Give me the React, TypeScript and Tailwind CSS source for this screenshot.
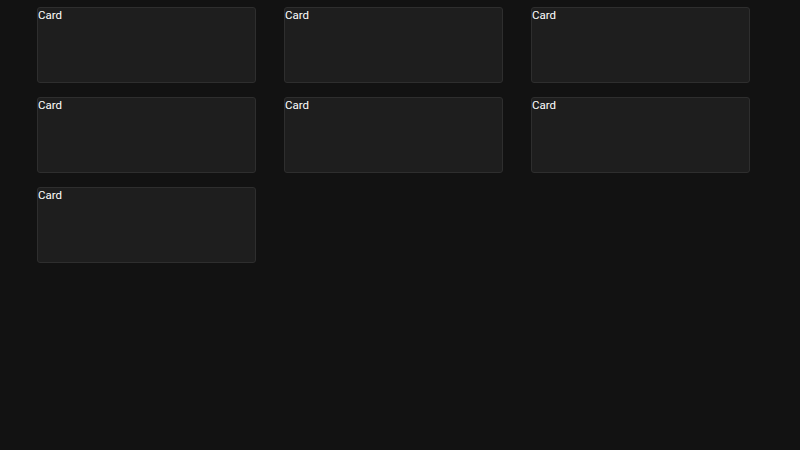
const cards = Array.from({length: 7}, (_, i) => i)

const App = () => {
  return (
    <div className="w-[800px] h-[450px] bg-[#121212] overflow-hidden" style={{fontFamily: "Roboto, sans-serif"}}>
      <div className="grid grid-cols-[219px_219px_219px] gap-x-[28px] gap-y-[14px] pl-[37px] pt-[7px]">
        {cards.map((c) => (
          <div key={c} className="h-[76px] bg-[#1e1e1e] border border-[#2e2e2e] rounded-[3px] text-white text-[11.5px] leading-[14px]">
            Card
          </div>
        ))}
      </div>
    </div>
  )
}

export default App
